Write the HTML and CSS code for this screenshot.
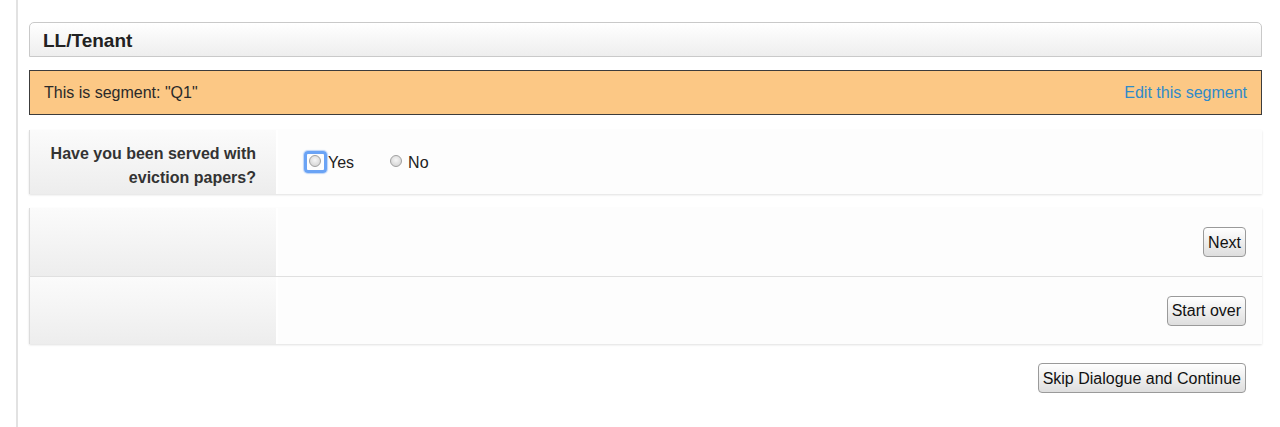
FILE: index.html
```html
<!DOCTYPE html>
<html>
<head>
<meta charset="utf-8">
<link rel="stylesheet" href="styles.css">
</head>
<body>
<div class="page">
  <div class="title">LL/Tenant</div>
  <div class="segment">
    <span>This is segment: "Q1"</span>
    <a class="edit" href="#">Edit this segment</a>
  </div>
  <div class="table">
    <div class="row q">
      <div class="label">Have you been served with<br>eviction papers?</div>
      <div class="field">
        <label class="opt"><span class="focus"><span class="radio"></span></span>Yes</label>
        <label class="opt no"><span class="radio"></span>No</label>
      </div>
    </div>
  </div>
  <div class="table second">
    <div class="row act">
      <div class="label"></div>
      <div class="field right"><button class="btn">Next</button></div>
    </div>
    <div class="row act">
      <div class="label"></div>
      <div class="field right"><button class="btn">Start over</button></div>
    </div>
  </div>
  <div class="skip"><button class="btn">Skip Dialogue and Continue</button></div>
</div>
</body>
</html>
```
FILE: styles.css
```css
html, body {
  margin: 0;
  background: #fff;
  font-family: "Liberation Sans", Arial, sans-serif;
  color: #222;
}
.page {
  margin-left: 16px;
  border-left: 2px solid #e2e2e2;
  padding: 22px 18px 0 11px;
  height: 405px;
}
.title {
  height: 33px;
  border: 1px solid #c9c9c9;
  border-radius: 5px 5px 0 0;
  background: linear-gradient(#ffffff, #eeeeee);
  font-weight: bold;
  font-size: 19px;
  line-height: 36px;
  padding-left: 13px;
  color: #222;
}
.segment {
  margin-top: 13px;
  height: 43px;
  border: 1px solid #3c3c3c;
  background: #fcc885;
  display: flex;
  align-items: center;
  justify-content: space-between;
  padding: 0 14px;
  font-size: 16px;
  color: #2a2a2a;
}
.edit {
  color: #2f8bc9;
  text-decoration: none;
  font-size: 16px;
}
.table {
  margin-top: 15px;
  box-shadow: 0 1px 2px rgba(0,0,0,0.12);
}
.table.second {
  margin-top: 14px;
}
.row {
  display: flex;
  gap: 2px;
}
.row.q { height: 64px; }
.row.act { height: 68px; }
.row.act + .row.act { border-top: 1px solid #e0e0e0; height: 67px; }
.label {
  width: 226px;
  padding-right: 20px;
  background: linear-gradient(#fbfbfb, #ededed);
  border-left: 1px solid #dcdcdc;
  display: flex;
  align-items: center;
  justify-content: flex-end;
  text-align: right;
  font-weight: bold;
  font-size: 16px;
  line-height: 24px;
  color: #333;
}
.row.q .label { padding-top: 8px; box-sizing: content-box; }
.field {
  flex: 1;
  background: #fdfdfd;
  display: flex;
  align-items: center;
  padding-left: 26px;
  font-size: 16px;
  color: #222;
}
.row.q .field { padding-top: 2px; }
.field.right {
  justify-content: flex-end;
  padding-right: 16px;
}
.opt {
  display: flex;
  align-items: center;
}
.focus {
  width: 17px;
  height: 16px;
  border: 3px solid #6aa3f5;
  border-radius: 4px;
  box-shadow: 0 0 1px 1px rgba(90,150,240,0.4);
  display: flex;
  align-items: center;
  justify-content: center;
  margin-right: 1px;
  margin-top: -2px;
}
.radio {
  width: 12px;
  height: 12px;
  border-radius: 50%;
  border: 1px solid #a0a0a0;
  background: radial-gradient(circle at 50% 40%, #f6f6f6, #cdcdcd);
  display: inline-block;
  margin-top: -4px;
  box-sizing: border-box;
}
.focus .radio { margin-top: -3px; margin-left: -1px; }
.opt.no { margin-left: 36px; }
.opt.no .radio { margin-right: 6px; }
.btn {
  font-family: "Liberation Sans", Arial, sans-serif;
  font-size: 16px;
  color: #111;
  height: 30px;
  padding: 1px 4px 0;
  border: 1px solid #9a9a9a;
  border-radius: 4px;
  background: linear-gradient(#ffffff, #dedede);
}
.skip {
  margin-top: 19px;
  display: flex;
  justify-content: flex-end;
  padding-right: 16px;
}
```
